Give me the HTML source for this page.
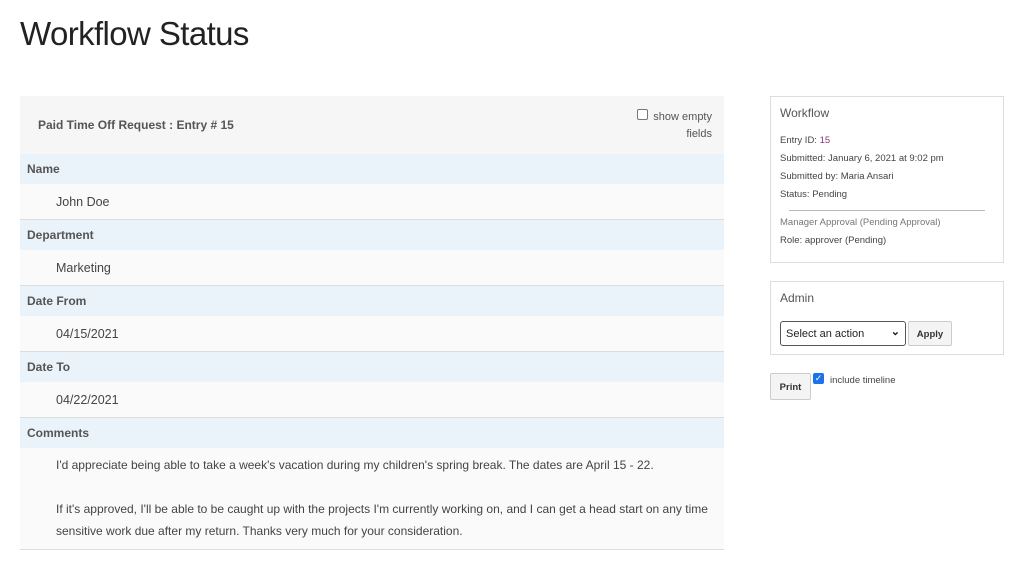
<!DOCTYPE html>
<html><head><meta charset="utf-8"><style>
*{box-sizing:border-box;margin:0;padding:0}
body{width:1024px;height:573px;background:#fff;font-family:"Liberation Sans",sans-serif;color:#444;position:relative;overflow:hidden}
h1{position:absolute;left:20px;top:15px;font-weight:300;font-size:33px;color:#222;letter-spacing:-0.6px}
.tbl{position:absolute;left:20px;top:96px;width:704px}
.hd{height:58px;background:#f6f6f6;position:relative}
.hd .t{position:absolute;left:18px;top:22px;font-size:12px;font-weight:bold;color:#555}
.hd .se{position:absolute;right:12px;top:13px;font-size:11px;color:#555;text-align:right;line-height:17px}
.hd .cb{position:absolute;left:617px;top:13px;width:11px;height:11px;border:1px solid #777;border-radius:2px;background:#fff}
.lb{height:30px;background:#eaf2fa;font-size:12px;font-weight:bold;color:#555;padding:8px 0 0 7px}
.vl{height:36px;background:#fafafa;border-bottom:1px solid #ddd;font-size:12.5px;padding:11px 0 0 36px;color:#444}
.cm{height:102px;line-height:22px;padding-top:6px;font-size:12px;padding-right:10px}
.box{position:absolute;left:770px;width:234px;border:1px solid #ddd;background:#fff}
.box h3{font-weight:normal;font-size:12px;color:#555;margin:9px 0 0 9px}
.wf p{font-size:9.5px;color:#444;margin-left:9px;height:18px}
.btn{border:1px solid #ccc;background:#f4f4f4;border-radius:2px;font-size:9.5px;font-weight:bold;color:#333;position:absolute;text-align:center}
</style></head><body>
<h1>Workflow Status</h1>
<div class="tbl">
<div class="hd"><div class="t">Paid Time Off Request : Entry # 15</div><div class="cb"></div><div class="se">show empty<br>fields</div></div>
<div class="lb">Name</div><div class="vl">John Doe</div>
<div class="lb">Department</div><div class="vl">Marketing</div>
<div class="lb">Date From</div><div class="vl">04/15/2021</div>
<div class="lb">Date To</div><div class="vl">04/22/2021</div>
<div class="lb">Comments</div>
<div class="vl cm">I'd appreciate being able to take a week's vacation during my children's spring break. The dates are April 15 - 22.<br><br>If it's approved, I'll be able to be caught up with the projects I'm currently working on, and I can get a head start on any time sensitive work due after my return. Thanks very much for your consideration.</div>
</div>
<div class="box wf" style="top:96px;height:167px">
<h3>Workflow</h3>
<div style="height:15px"></div>
<p>Entry ID: <span style="color:#8a3a7a">15</span></p>
<p>Submitted: January 6, 2021 at 9:02 pm</p>
<p>Submitted by: Maria Ansari</p>
<p>Status: Pending</p>
<div style="border-top:1px solid #bbb;margin:3px 18px 6px 18px"></div>
<p style="color:#777">Manager Approval (Pending Approval)</p>
<p>Role: approver (Pending)</p>
</div>
<div class="box" style="top:281px;height:74px">
<h3>Admin</h3>
<div style="position:absolute;left:9px;top:39px;width:126px;height:25px;border:1px solid #555;border-radius:3px;font-size:11px;color:#222;padding:6px 0 0 5px">Select an action<span style="position:absolute;right:5px;top:3px;font-size:11px;font-weight:bold">&#x2304;</span></div>
<div class="btn" style="left:137px;top:39px;width:44px;height:25px;padding-top:7px">Apply</div>
</div>
<div class="btn" style="left:770px;top:373px;width:41px;height:27px;padding-top:8px">Print</div>
<div style="position:absolute;left:813px;top:373px;width:11px;height:11px;background:#1a73e8;border-radius:2px;color:#fff;font-size:9px;line-height:11px;text-align:center">✓</div>
<div style="position:absolute;left:830px;top:375px;font-size:9.5px;color:#444">include timeline</div>
</body></html>
